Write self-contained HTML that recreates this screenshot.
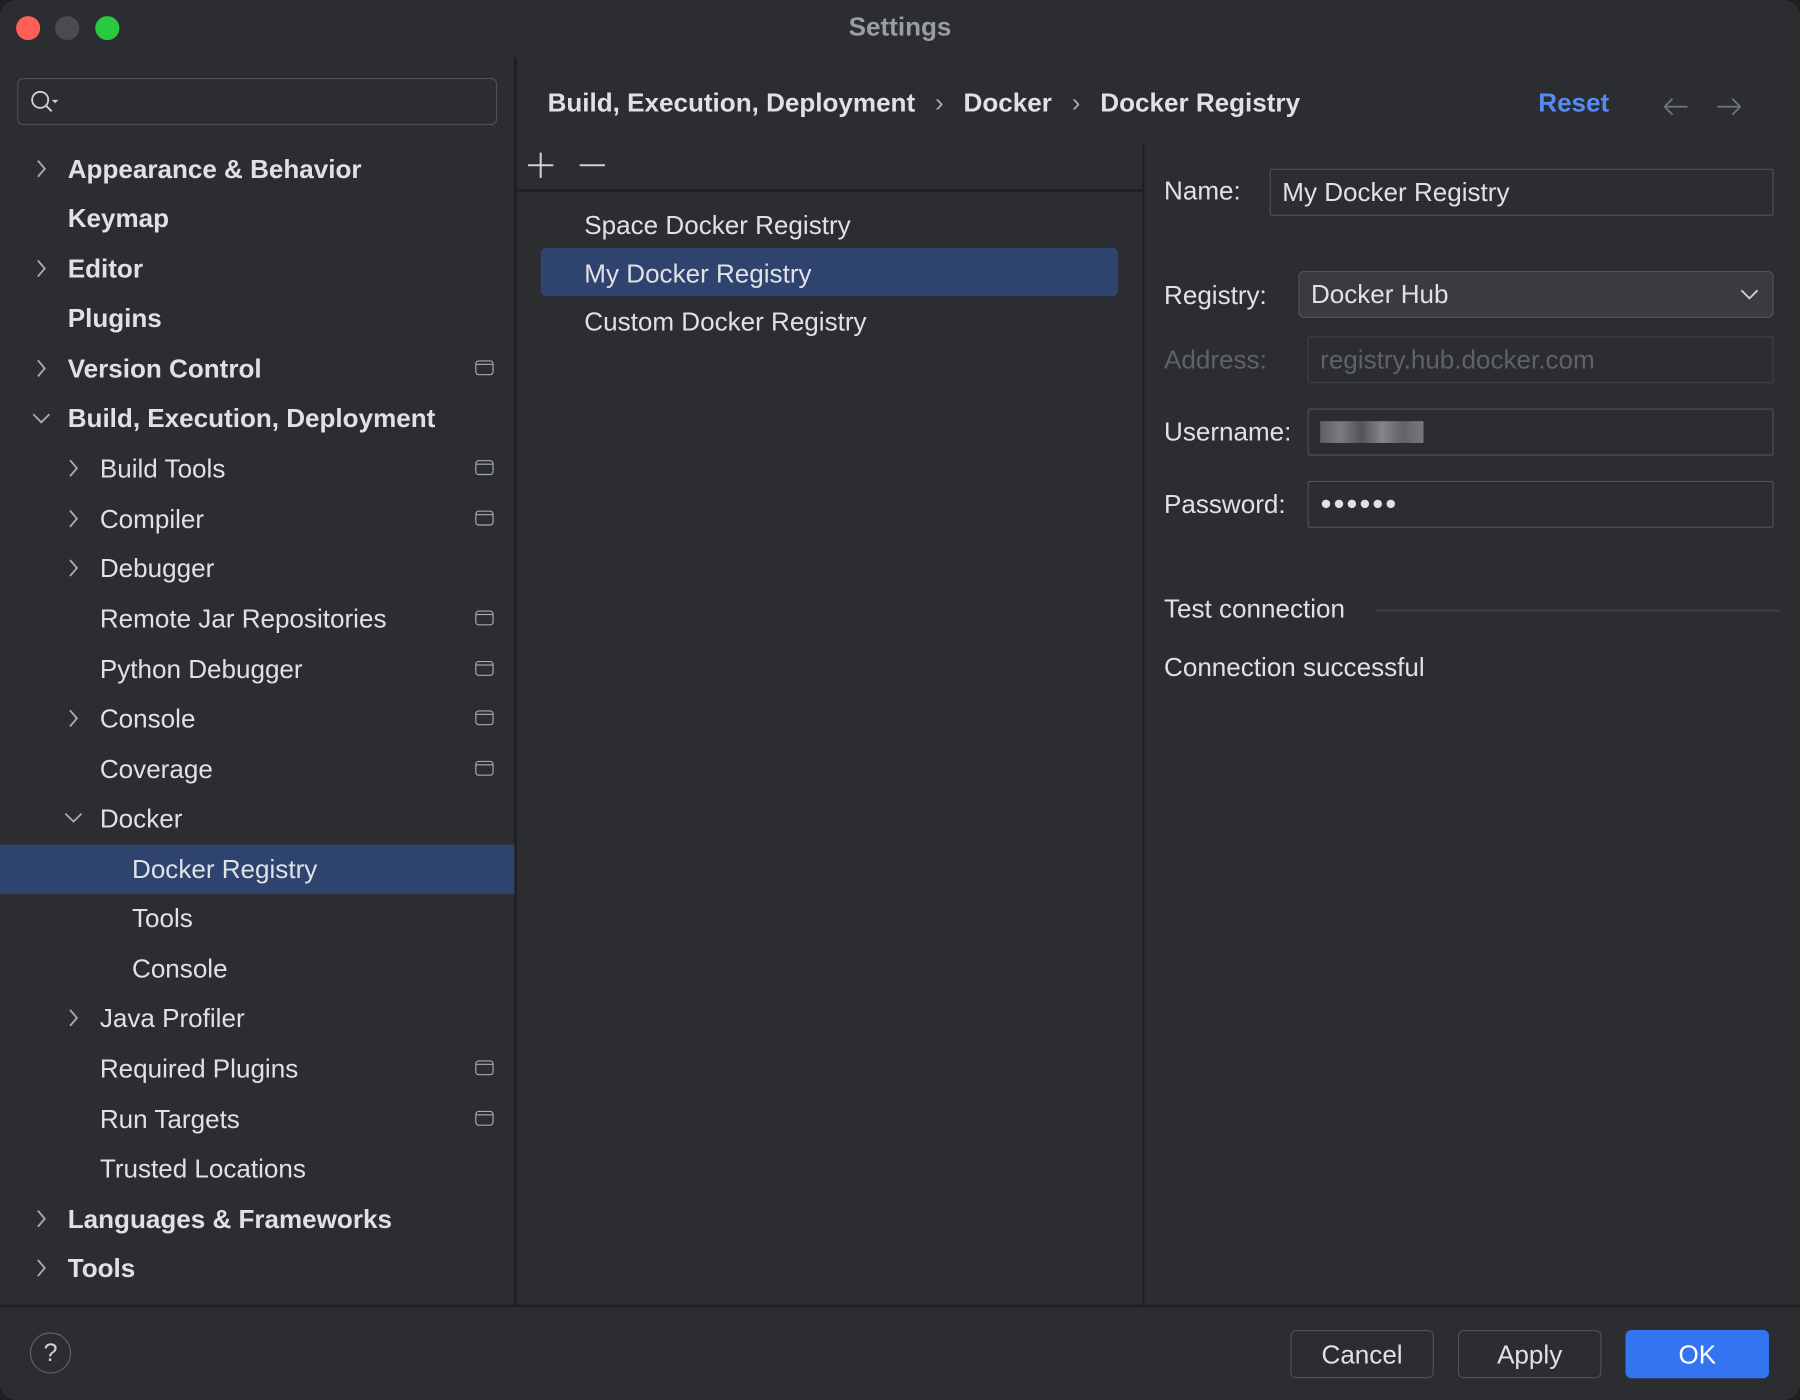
<!DOCTYPE html>
<html><head><meta charset="utf-8"><style>
html,body{margin:0;padding:0;background:#1e1f22;width:1800px;height:1400px;overflow:hidden}
#w{position:absolute;left:0;top:0;width:1568px;height:1220px;transform:scale(1.14796,1.14754);transform-origin:0 0;background:#2b2d30;border-radius:14px;overflow:hidden;font-family:"Liberation Sans",sans-serif;color:#dfe1e5}
.a{position:absolute}
.t{position:absolute;font-size:22.7px;line-height:44px;height:44px;white-space:nowrap}
.b{font-weight:bold}
.ic{position:absolute;left:414px;width:14px;height:11px;border:1.6px solid #a8abb1;border-radius:3px}
.ic:after{content:"";position:absolute;left:0;right:0;top:2px;border-top:1.6px solid #a8abb1}
.fld{position:absolute;border:1.5px solid #4e5157;border-radius:2px;box-sizing:border-box;font-size:22.7px;padding-left:10px;white-space:nowrap}
.btn{position:absolute;top:1159px;height:42px;width:125px;box-sizing:border-box;border:1.5px solid #4e5157;border-radius:5px;text-align:center;line-height:40px;font-size:22.7px}
</style></head><body><div id="w">
<div class="a" style="left:14px;top:14px;width:21px;height:21px;border-radius:50%;background:#fe5f57"></div>
<div class="a" style="left:48px;top:14px;width:21px;height:21px;border-radius:50%;background:#4a4b4e"></div>
<div class="a" style="left:83px;top:14px;width:21px;height:21px;border-radius:50%;background:#28c840"></div>
<div class="t b" style="left:0;width:1568px;text-align:center;top:1px;color:#9a9da2">Settings</div>
<div class="a" style="left:448px;top:50px;width:1.5px;height:1088px;background:#1e1f22"></div>
<div class="a" style="left:995px;top:125px;width:1.5px;height:1013px;background:#1e1f22"></div>
<div class="a" style="left:449px;top:165px;width:546px;height:2px;background:#1e1f22"></div>
<div class="a" style="left:0;top:1137px;width:1568px;height:2px;background:#1e1f22"></div>
<div class="a" style="left:15px;top:68px;width:418px;height:41px;box-sizing:border-box;border:1.5px solid #4e5157;border-radius:5px"></div>
<svg class="a" style="left:25px;top:76px" width="30" height="26"><circle cx="10" cy="11" r="7" fill="none" stroke="#cfd1d5" stroke-width="1.6"/><line x1="15" y1="16" x2="20" y2="21" stroke="#cfd1d5" stroke-width="1.6"/><path d="M20 11 L26 11 L23 14Z" fill="#cfd1d5"/></svg>
<div class="a" style="left:0;top:736px;width:448px;height:43px;background:#2e436e"></div>
<svg class="a" style="left:0;top:0" width="448" height="1140" fill="none" stroke="#a8abb1" stroke-width="1.6">
<path d="M33 140l6 7-6 7M33 227l6 7-6 7M33 314l6 7-6 7M29 361l7 7 7-7M61 401l6 7-6 7M61 445l6 7-6 7M61 488l6 7-6 7M61 619l6 7-6 7M57 709l7 7 7-7M61 880l6 7-6 7M33 1055l6 7-6 7M33 1098l6 7-6 7"/>
</svg>
<div class="t b" style="left:59px;top:125px">Appearance &amp; Behavior</div>
<div class="t b" style="left:59px;top:168px">Keymap</div>
<div class="t b" style="left:59px;top:212px">Editor</div>
<div class="t b" style="left:59px;top:255px">Plugins</div>
<div class="t b" style="left:59px;top:299px">Version Control</div><div class="ic" style="top:314px"></div>
<div class="t b" style="left:59px;top:342px">Build, Execution, Deployment</div>
<div class="t" style="left:87px;top:386px">Build Tools</div><div class="ic" style="top:401px"></div>
<div class="t" style="left:87px;top:430px">Compiler</div><div class="ic" style="top:445px"></div>
<div class="t" style="left:87px;top:473px">Debugger</div>
<div class="t" style="left:87px;top:517px">Remote Jar Repositories</div><div class="ic" style="top:532px"></div>
<div class="t" style="left:87px;top:561px">Python Debugger</div><div class="ic" style="top:576px"></div>
<div class="t" style="left:87px;top:604px">Console</div><div class="ic" style="top:619px"></div>
<div class="t" style="left:87px;top:648px">Coverage</div><div class="ic" style="top:663px"></div>
<div class="t" style="left:87px;top:691px">Docker</div>
<div class="t" style="left:115px;top:735px">Docker Registry</div>
<div class="t" style="left:115px;top:778px">Tools</div>
<div class="t" style="left:115px;top:822px">Console</div>
<div class="t" style="left:87px;top:865px">Java Profiler</div>
<div class="t" style="left:87px;top:909px">Required Plugins</div><div class="ic" style="top:924px"></div>
<div class="t" style="left:87px;top:953px">Run Targets</div><div class="ic" style="top:968px"></div>
<div class="t" style="left:87px;top:996px">Trusted Locations</div>
<div class="t b" style="left:59px;top:1040px">Languages &amp; Frameworks</div>
<div class="t b" style="left:59px;top:1083px">Tools</div>
<div class="t b" style="left:477px;top:67px">Build, Execution, Deployment <span style="font-weight:normal;color:#a8abb1;padding:0 11px">›</span> Docker <span style="font-weight:normal;color:#a8abb1;padding:0 11px">›</span> Docker Registry</div>
<div class="t b" style="left:1340px;top:67px;color:#548af7">Reset</div>
<svg class="a" style="left:1446px;top:82px" width="80" height="22" fill="none" stroke="#6f737a" stroke-width="1.6"><path d="M4 11h20M4 11l7-7M4 11l7 7M50 11h20M70 11l-7-7M70 11l-7 7"/></svg>
<svg class="a" style="left:458px;top:132px" width="80" height="24" fill="none" stroke="#cfd1d5" stroke-width="1.8"><path d="M13 1v22M2 12h22M47 12h22"/></svg>
<div class="t" style="left:509px;top:174px">Space Docker Registry</div>
<div class="a" style="left:471px;top:216px;width:503px;height:42px;background:#2e436e;border-radius:5px"></div>
<div class="t" style="left:509px;top:216px">My Docker Registry</div>
<div class="t" style="left:509px;top:258px">Custom Docker Registry</div>
<div class="t" style="left:1014px;top:144px">Name:</div>
<div class="fld" style="left:1106px;top:147px;width:439px;height:41px;line-height:38px">My Docker Registry</div>
<div class="t" style="left:1014px;top:235px">Registry:</div>
<div class="fld" style="left:1131px;top:236px;width:414px;height:41px;line-height:38px;background:#393b40;border-radius:5px">Docker Hub</div>
<svg class="a" style="left:1515px;top:249px" width="18" height="14" fill="none" stroke="#cfd1d5" stroke-width="1.6"><path d="M2 4l7 7 7-7"/></svg>
<div class="t" style="left:1014px;top:291px;color:#5f6268">Address:</div>
<div class="fld" style="left:1139px;top:293px;width:406px;height:41px;line-height:38px;color:#5f6268;border-color:#3e4045">registry.hub.docker.com</div>
<div class="t" style="left:1014px;top:354px">Username:</div>
<div class="fld" style="left:1139px;top:356px;width:406px;height:41px"></div>
<div class="a" style="left:1150px;top:367px;width:90px;height:19px;background:linear-gradient(90deg,#6a6c70,#8d8f93,#5c5e62,#9a9ca0,#6e7074,#8a8c90);opacity:.8"></div>
<div class="t" style="left:1014px;top:417px">Password:</div>
<div class="fld" style="left:1139px;top:419px;width:406px;height:41px;line-height:38px;font-size:17px;letter-spacing:1px">●●●●●●</div>
<div class="t" style="left:1014px;top:508px">Test connection</div>
<div class="a" style="left:1198px;top:531px;width:352px;height:1.5px;background:#3e4045"></div>
<div class="t" style="left:1014px;top:559px">Connection successful</div>
<div class="a" style="left:26px;top:1161px;width:36px;height:36px;box-sizing:border-box;border:1.5px solid #5f6268;border-radius:50%;text-align:center;line-height:34px;font-size:22px;color:#cfd1d5">?</div>
<div class="btn" style="left:1124px">Cancel</div>
<div class="btn" style="left:1270px">Apply</div>
<div class="btn" style="left:1416px;background:#3574f0;border-color:#3574f0;color:#fff">OK</div>
</div></body></html>
